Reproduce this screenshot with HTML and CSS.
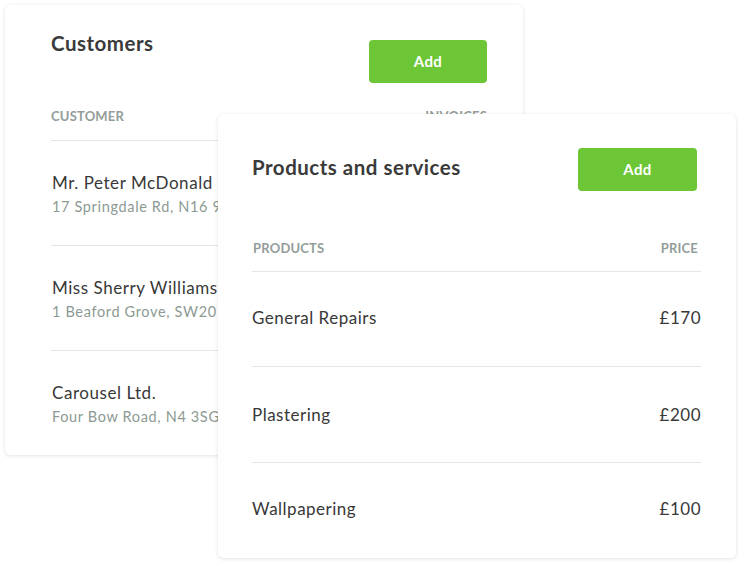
FILE: index.html
```html
<!DOCTYPE html>
<html>
<head>
<meta charset="utf-8">
<link rel="stylesheet" href="styles.css">
</head>
<body>
<div class="stage">
  <section class="card card-customers">
    <div class="card-head">
      <h2 class="title">Customers</h2>
      <button class="btn">Add</button>
    </div>
    <div class="col-head">
      <span>Customer</span>
      <span>Invoices</span>
    </div>
    <div class="cust-row">
      <div class="name">Mr. Peter McDonald</div>
      <div class="addr">17 Springdale Rd, N16 9NS</div>
    </div>
    <div class="cust-row">
      <div class="name">Miss Sherry Williams</div>
      <div class="addr">1 Beaford Grove, SW20 9LB</div>
    </div>
    <div class="cust-row">
      <div class="name">Carousel Ltd.</div>
      <div class="addr">Four Bow Road, N4 3SG</div>
    </div>
  </section>

  <section class="card card-products">
    <div class="card-head">
      <h2 class="title">Products and services</h2>
      <button class="btn">Add</button>
    </div>
    <div class="col-head">
      <span>Products</span>
      <span>Price</span>
    </div>
    <div class="prod-row row-1"><span>General Repairs</span><span>£170</span></div>
    <div class="prod-row row-2"><span>Plastering</span><span>£200</span></div>
    <div class="prod-row row-3"><span>Wallpapering</span><span>£100</span></div>
  </section>
</div>
</body>
</html>
```
FILE: styles.css
```css
* { box-sizing: border-box; }
html, body { margin: 0; padding: 0; background: #ffffff; }
body {
  font-family: Lato, "Open Sans", "Liberation Sans", sans-serif;
  color: #3b3b3b;
  width: 744px;
  height: 566px;
  overflow: hidden;
}
.stage { position: relative; width: 744px; height: 566px; }

.card {
  position: absolute;
  background: #fff;
  border-radius: 5px;
  box-shadow: 0 1px 4px rgba(0,0,0,0.10), 0 0 1px rgba(0,0,0,0.08);
  display: flex;
  flex-direction: column;
}
.card-customers {
  left: 5px; top: 5px; width: 518px; height: 450px;
  padding: 27px 36px 0 46px;
}
.card-products {
  left: 218px; top: 114px; width: 518px; height: 444px;
  padding: 34px 35px 0 34px;
}

.card-head {
  display: flex;
  justify-content: space-between;
  align-items: flex-start;
}
.title {
  margin: 0;
  font-size: 20.5px;
  line-height: 22px;
  font-weight: 700;
  color: #3a3a3a;
  letter-spacing: 0.5px;
}
.card-products .title { margin-top: 7px; line-height: 24px; }

.btn {
  margin-top: 8px;
  width: 118px;
  height: 43px;
  border: 0;
  border-radius: 4px;
  background: #6cc635;
  color: #fff;
  font-family: inherit;
  font-size: 15px;
  font-weight: 700;
  letter-spacing: 0.4px;
  padding: 0 0 1px 0;
}
.card-products .btn { margin-top: 0; width: 119px; margin-right: 4px; }

.col-head {
  display: flex;
  justify-content: space-between;
  font-size: 13px;
  line-height: 16px;
  font-weight: 700;
  color: #939d99;
  text-transform: uppercase;
  letter-spacing: 0.2px;
  padding: 25px 0 16px 0;
  border-bottom: 1px solid #e4e6e5;
}
.card-products .col-head { padding: 49px 3px 15px 1px; }

.cust-row {
  padding: 31px 0 28px 1px;
  border-bottom: 1px solid #e4e6e5;
}
.cust-row:last-child { border-bottom: 0; }
.name {
  font-size: 17px;
  line-height: 22px;
  color: #383838;
  letter-spacing: 0.55px;
}
.addr {
  margin-top: 3px;
  font-size: 14.5px;
  line-height: 20px;
  color: #8c9a93;
  letter-spacing: 0.65px;
}

.prod-row {
  display: flex;
  justify-content: space-between;
  height: 96px;
  font-size: 17px;
  line-height: 22px;
  color: #383838;
  letter-spacing: 0.5px;
  border-bottom: 1px solid #e4e6e5;
}
.row-1 { padding-top: 35px; }
.row-2 { padding-top: 37px; }
.row-3 { padding-top: 35px; border-bottom: 0; }
```
